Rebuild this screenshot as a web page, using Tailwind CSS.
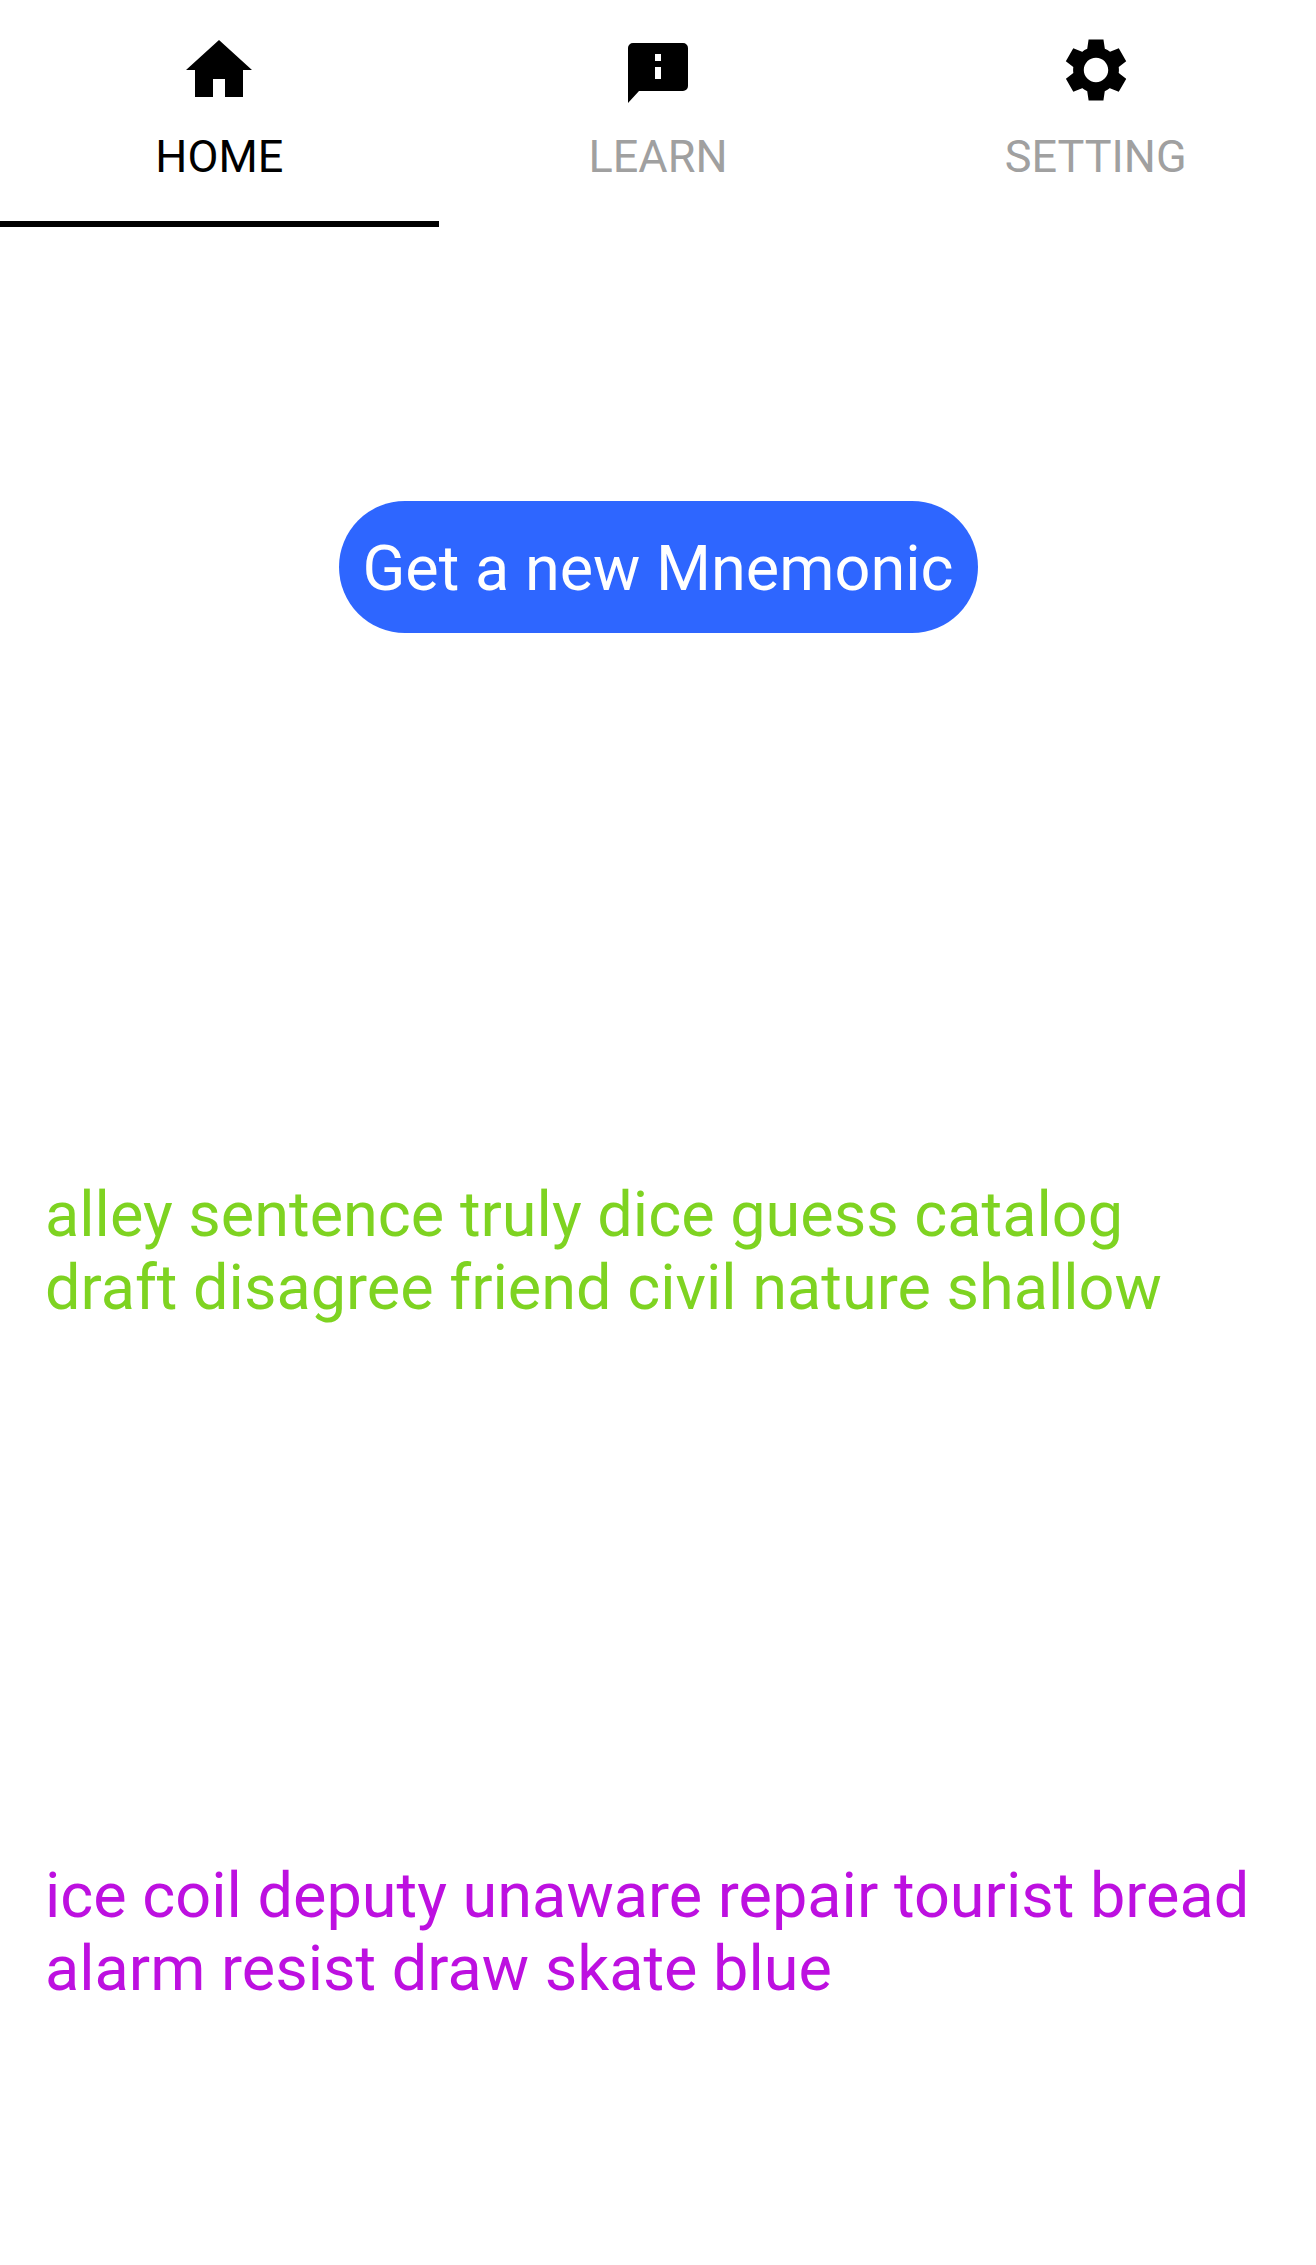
<!DOCTYPE html>
<html lang="en">
<head>
    <meta charset="UTF-8">
    <meta name="viewport" content="width=device-width, initial-scale=1.0">
    <title>Mnemonic</title>
    <script src="https://cdn.jsdelivr.net/npm/@tailwindcss/browser@4"></script>
</head>
<body class="bg-white font-['Roboto',sans-serif] w-[1316px] h-[2265px] overflow-hidden">
    <!-- Tabs -->
    <nav class="grid grid-cols-3 h-[227px]">
        <div class="flex flex-col items-center pt-[30px] border-b-[6px] border-black text-black">
            <svg class="w-20 h-20" viewBox="0 0 80 80" fill="#000"><path d="M40 10 7 40h9v27h18V49h12v18h18V40h9z"/></svg>
            <span class="text-[45px] leading-[52px] mt-[21px]">HOME</span>
        </div>
        <div class="flex flex-col items-center pt-[30px] text-[#a0a0a0]">
            <svg class="w-20 h-20" viewBox="0 0 80 80" fill="#000"><path fill-rule="evenodd" d="M15 13h50a5 5 0 0 1 5 5v38a5 5 0 0 1-5 5H21L10 73V18a5 5 0 0 1 5-5zM37 24v7h6v-7zM37 37v12h6V37z"/></svg>
            <span class="text-[45px] leading-[52px] mt-[21px]">LEARN</span>
        </div>
        <div class="flex flex-col items-center pt-[30px] pr-[2px] text-[#a0a0a0]">
            <svg class="w-20 h-20" viewBox="-1.1 -1.1 26.2 26.2" fill="#000"><path fill-rule="evenodd" d="M19.44 12.99l-.01.02c.04-.33.08-.67.08-1.01 0-.34-.03-.66-.07-.99l.01.02 2.44-1.92-2.43-4.22-2.87 1.16.01.01c-.52-.4-1.09-.74-1.71-1h.01L14.44 2H9.57l-.44 3.07h.01c-.62.26-1.19.6-1.71 1l.01-.01-2.88-1.17-2.44 4.22 2.44 1.92.01-.02c-.04.33-.07.65-.07.99 0 .34.03.68.08 1.01l-.01-.02-2.1 1.65-.33.26 2.43 4.2 2.88-1.15-.02-.04c.53.41 1.1.75 1.73 1.01h-.03L9.58 22h4.85s.03-.18.06-.42l.38-2.65h-.01c.62-.26 1.2-.6 1.73-1.01l-.02.04 2.88 1.15 2.43-4.2s-.14-.12-.33-.26l-2.11-1.66zM12 16c-2.2 0-4-1.8-4-4s1.8-4 4-4 4 1.8 4 4-1.8 4-4 4z"/></svg>
            <span class="text-[45px] leading-[52px] mt-[21px]">SETTING</span>
        </div>
    </nav>

    <main class="flex flex-col">
        <div class="flex justify-center pt-[274px]">
            <button class="h-[132px] w-[639px] rounded-[66px] bg-[#2e66ff] text-white text-[63px] pt-[4px]">Get a new Mnemonic</button>
        </div>
        <p class="mt-[545px] pl-[45px] pr-[60px] text-[63px] leading-[73px] text-[#7ed321]">alley sentence truly dice guess catalog draft disagree friend civil nature shallow</p>
        <p class="mt-[535px] pl-[45px] pr-[60px] text-[63px] leading-[73px] text-[#bd10e0]">ice coil deputy unaware repair tourist bread alarm resist draw skate blue</p>
    </main>
</body>
</html>
